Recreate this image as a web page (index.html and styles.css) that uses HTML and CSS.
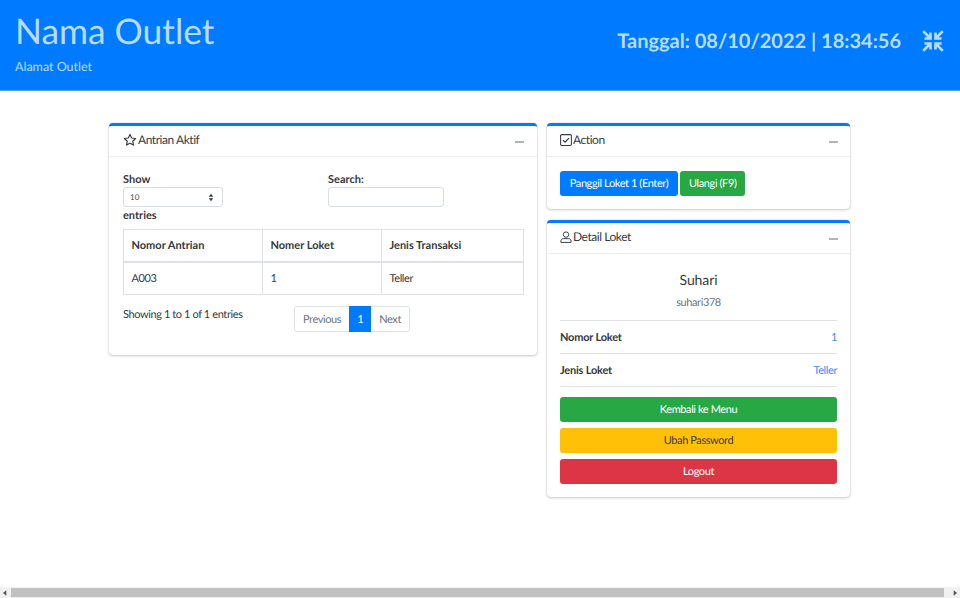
FILE: index.html
```html
<!DOCTYPE html>
<html lang="id">
<head>
<meta charset="utf-8">
<title>Antrian</title>
<link rel="stylesheet" href="styles.css">
</head>
<body>
<header class="top">
  <div class="brand">
    <h1>Nama Outlet</h1>
    <p>Alamat Outlet</p>
  </div>
  <div class="clock">
    <span>Tanggal: 08/10/2022 | 18:34:56</span>
    <svg class="compress" viewBox="0 0 22 22" width="22" height="22" aria-hidden="true">
      <g fill="none" stroke="#b8dcff" stroke-width="2.6">
        <path d="M1.200 1.200 7.500 7.500M2.500 8.500h6v-6"/>
        <path d="M20.800 1.200 14.500 7.500M19.500 8.500h-6v-6"/>
        <path d="M1.200 20.800 7.500 14.500M2.500 13.500h6v6"/>
        <path d="M20.800 20.800 14.500 14.500M19.500 13.500h-6v6"/>
      </g>
    </svg>
  </div>
</header>
<main class="content">
  <section class="col-left">
    <article class="card">
      <div class="card-head">
        <h2><svg viewBox="0 0 16 16" width="14" height="14" aria-hidden="true"><path d="M8 1.600l1.950 4.100 4.450.6-3.250 3.100.8 4.450L8 11.700l-3.950 2.150.8-4.450L1.600 6.300l4.450-.6z" fill="none" stroke="#343a40" stroke-width="1.300" stroke-linejoin="round"/></svg>Antrian Aktif</h2>
        <span class="minus"></span>
      </div>
      <div class="card-body left-body">
        <div class="filters">
          <label class="length">Show
            <span class="select">10<svg viewBox="0 0 8 12" width="6" height="9" aria-hidden="true"><path d="M4 1 7 5H1zM4 11 1 7h6z" fill="#343a40"/></svg></span>
            entries
          </label>
          <label class="search">Search:
            <span class="input"></span>
          </label>
        </div>
        <table>
          <thead><tr><th class="c1">Nomor Antrian</th><th class="c2">Nomer Loket</th><th>Jenis Transaksi</th></tr></thead>
          <tbody><tr><td>A003</td><td>1</td><td>Teller</td></tr></tbody>
        </table>
        <div class="foot">
          <div class="info">Showing 1 to 1 of 1 entries</div>
          <div class="pager"><a>Previous</a><a class="on">1</a><a>Next</a></div>
        </div>
      </div>
    </article>
  </section>
  <section class="col-right">
    <article class="card">
      <div class="card-head">
        <h2><svg viewBox="0 0 16 16" width="12" height="12" aria-hidden="true"><rect x=".8" y=".8" width="14.400" height="14.400" rx="1.600" fill="none" stroke="#343a40" stroke-width="1.400"/><path d="M4 8.200l2.800 2.800L12 5.400" fill="none" stroke="#343a40" stroke-width="1.600"/></svg>Action</h2>
        <span class="minus"></span>
      </div>
      <div class="card-body action-body">
        <a class="btn blue">Panggil Loket 1 (Enter)</a>
        <a class="btn green">Ulangi (F9)</a>
      </div>
    </article>
    <article class="card">
      <div class="card-head">
        <h2><svg viewBox="0 0 16 16" width="12" height="12" aria-hidden="true"><circle cx="8" cy="4.800" r="3.600" fill="none" stroke="#343a40" stroke-width="1.300"/><path d="M1.200 15.200v-1.600c0-2 1.500-3.400 3.400-3.400h6.800c1.900 0 3.400 1.400 3.400 3.400v1.600z" fill="none" stroke="#343a40" stroke-width="1.300"/></svg>Detail Loket</h2>
        <span class="minus"></span>
      </div>
      <div class="card-body detail-body">
        <h3>Suhari</h3>
        <p class="user">suhari378</p>
        <ul class="rows">
          <li><b>Nomor Loket</b><a>1</a></li>
          <li><b>Jenis Loket</b><a>Teller</a></li>
        </ul>
        <div class="stack">
          <a class="btn green">Kembali ke Menu</a>
          <a class="btn yellow">Ubah Password</a>
          <a class="btn red">Logout</a>
        </div>
      </div>
    </article>
  </section>
</main>
<div class="hscroll" aria-hidden="true">
  <span class="arrow"><svg viewBox="0 0 6 8" width="4" height="6"><path d="M5 0v8L0 4z" fill="#555"/></svg></span>
  <span class="thumb"></span>
  <span class="arrow"><svg viewBox="0 0 6 8" width="4" height="6"><path d="M1 0v8l5-4z" fill="#555"/></svg></span>
</div>
</body>
</html>
```

FILE: styles.css
```css
* { box-sizing: border-box; }
html, body { margin: 0; height: 100%; overflow: hidden; }
body {
  font-family: Lato, "Noto Sans", sans-serif;
  font-size: 11px;
  line-height: 1.4;
  color: #343a40;
  background: #fff;
  text-rendering: geometricPrecision;
}
.top {
  height: 91px;
  background: #007bff;
  border-bottom: 1px solid #4da3ff;
  display: flex;
  justify-content: space-between;
  padding: 0 15px;
  color: #b8dcff;
}
.brand h1 {
  margin: 9px 0 0;
  font-size: 35.300px;
  font-weight: 400;
  line-height: 44px;
}
.brand p { margin: 5px 0 0; font-size: 12.500px; line-height: 18px; }
.clock {
  display: flex;
  align-items: flex-start;
  gap: 21px;
  padding-top: 27px;
  font-size: 20px;
  font-weight: 700;
  line-height: 28px;
  white-space: nowrap;
}
.compress { margin: 3px 1px 0 0; }
.content {
  width: 741px;
  margin: 32px auto 0 109px;
  display: grid;
  grid-template-columns: 428px 303px;
  gap: 11px 10px;
  align-items: start;
}
.col-right { display: flex; flex-direction: column; gap: 11px; }
.card {
  background: #fff;
  border-top: 3px solid #007bff;
  border-radius: 4px;
  box-shadow: 0 0 1px rgba(0,0,0,.25), 0 1px 3px rgba(0,0,0,.2);
}
.card-body { letter-spacing: -.4px; }
.card-head {
  height: 31px;
  padding: 0 14px 3px;
  border-bottom: 1px solid #eceef0;
  display: flex;
  align-items: center;
  justify-content: space-between;
}
.col-right .card-head { padding-left: 13px; padding-right: 13px; }
.card-head h2 {
  margin: 0;
  display: flex;
  align-items: center;
  gap: 1px;
  font-size: 12px;
  font-weight: 400;
  line-height: 18px;
  letter-spacing: -.45px;
}
.minus { width: 9px; height: 2px; background: #adb5bd; margin: 5px -1px 0 0; }
.left-body { padding: 15px 14px 23px; }
.filters { display: flex; height: 57px; }
.filters label { display: block; font-weight: 700; line-height: 15px; letter-spacing: 0; }
.length { width: 205px; }
.select {
  display: flex;
  justify-content: space-between;
  align-items: center;
  width: 100px;
  height: 20px;
  margin: 0 0 1px;
  padding: 0 8px 0 6px;
  border: 1px solid #d8dde2;
  border-radius: 3px;
  font-size: 8px;
  font-weight: 400;
  color: #495057;
}
.input {
  display: block;
  width: 116px;
  height: 20px;
  border: 1px solid #d8dde2;
  border-radius: 3px;
}
table {
  width: 401px;
  border-collapse: collapse;
  table-layout: fixed;
}
th, td {
  height: 33px;
  padding: 1px 7.500px 0;
  border: 1px solid #dee2e6;
  text-align: left;
  font-size: 11px;
}
th { border-bottom-width: 2px; height: 32px; letter-spacing: 0; }
.c1 { width: 139px; }
.c2 { width: 119px; }
.foot { display: flex; margin-top: 11px; }
.info { width: 171px; line-height: 17px; }
.pager { display: flex; height: 26px; border: 1px solid #dee2e6; border-radius: 3px; color: #6c757d; }
.pager a { padding: 0 8px; line-height: 25px; font-size: 11px; }
.pager a:last-child { padding-right: 7.500px; }
.pager .on { background: #007bff; color: #fff; margin: -1px 0; line-height: 27px; }
.btn {
  display: block;
  height: 25px;
  line-height: 25px;
  border-radius: 3px;
  text-align: center;
  color: #fff;
  white-space: nowrap;
}
.action-body { padding: 14px 13px 13px; display: flex; gap: 2px; }
.action-body .btn { padding: 0 9px; }
.blue { background: #007bff; width: 118px; }
.green { background: #28a745; }
.yellow { background: #ffc107; color: #343a40; }
.red { background: #dc3545; }
.detail-body { padding: 15px 13px 13px; }
h3 { margin: 0; text-align: center; font-size: 14px; font-weight: 400; line-height: 22px; letter-spacing: -.1px; }
.user { margin: 3px 0 0; text-align: center; color: #6c757d; line-height: 18px; }
.rows { list-style: none; margin: 8px 0 10px; padding: 0; border-bottom: 1px solid #dfe2e5; }
.rows li {
  height: 33px;
  padding-top: 1px;
  display: flex;
  align-items: center;
  justify-content: space-between;
  border-top: 1px solid #dfe2e5;
}
.rows b { letter-spacing: -.2px; }
.rows a { color: #3b8cf0; }
.stack { display: flex; flex-direction: column; gap: 6px; }
.hscroll {
  position: fixed;
  left: 0;
  right: 0;
  bottom: 0;
  height: 11px;
  display: flex;
  align-items: stretch;
  background: #f1f1f1;
  padding-top: 1px;
}
.arrow { width: 10px; display: flex; align-items: center; justify-content: center; }
.thumb { flex: 1; background: #c1c1c1; margin: 0 6px 1px 1px; }
```
